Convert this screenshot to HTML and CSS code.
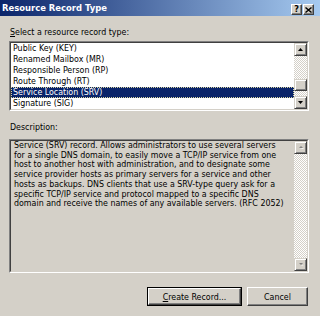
FILE: index.html
```html
<!DOCTYPE html>
<html>
<head>
<meta charset="utf-8">
<link rel="stylesheet" href="styles.css">
</head>
<body>
<div class="window">
  <div class="titlebar">
    <span class="title">Resource Record Type</span>
    <div class="caption-btns">
      <span class="cbtn help">?</span>
      <span class="cbtn close"><svg width="7" height="6" viewBox="0 0 7 6"><path d="M0.5 0.5 L6.5 5.5 M6.5 0.5 L0.5 5.5" stroke="#000" stroke-width="1.4" fill="none"/></svg></span>
    </div>
  </div>
  <div class="content">
    <div class="label"><u>S</u>elect a resource record type:</div>
    <div class="listbox sunken">
      <div class="sunken-inner">
        <ul class="items">
          <li>Public Key (KEY)</li>
          <li>Renamed Mailbox (MR)</li>
          <li>Responsible Person (RP)</li>
          <li>Route Through (RT)</li>
          <li class="selected">Service Location (SRV)</li>
          <li>Signature (SIG)</li>
        </ul>
        <div class="scrollbar">
          <div class="sbtn"><svg width="5" height="3" viewBox="0 0 5 3"><path d="M2.5 0 L5 3 L0 3 Z" fill="#000"/></svg></div>
          <div class="track"><div class="thumb"></div></div>
          <div class="sbtn"><svg width="5" height="3" viewBox="0 0 5 3"><path d="M0 0 L5 0 L2.5 3 Z" fill="#000"/></svg></div>
        </div>
      </div>
    </div>
    <div class="label desc-label">Description:</div>
    <div class="descbox sunken">
      <div class="sunken-inner">
        <div class="desc-text">Service (SRV) record. Allows administrators to use several servers<br>for a single DNS domain, to easily move a TCP/IP service from one<br>host to another host with administration, and to designate some<br>service provider hosts as primary servers for a service and other<br>hosts as backups. DNS clients that use a SRV-type query ask for a<br>specific TCP/IP service and protocol mapped to a specific DNS<br>domain and receive the names of any available servers. (RFC 2052)</div>
        <div class="scrollbar disabled">
          <div class="sbtn"><svg width="6" height="4" viewBox="0 0 6 4"><path d="M3 0 L5 2 L1 2 Z" fill="#808080"/><path d="M5 2 L6 3 L1 3 Z" fill="#fff" opacity="0.9"/></svg></div>
          <div class="track"></div>
          <div class="sbtn"><svg width="6" height="4" viewBox="0 0 6 4"><path d="M1 0 L5 0 L3 2 Z" fill="#808080"/><path d="M3 3 L4 2 L6 2 Z" fill="#fff" opacity="0.9"/></svg></div>
        </div>
      </div>
    </div>
    <div class="buttons">
      <button class="btn default"><span class="btn-face"><u>C</u>reate Record...</span></button>
      <button class="btn cancel"><span class="btn-face">Cancel</span></button>
    </div>
  </div>
</div>
</body>
</html>
```

FILE: styles.css
```css
* { box-sizing: border-box; }
html, body { margin: 0; padding: 0; }
body {
  width: 320px;
  height: 316px;
  overflow: hidden;
  background: #d4d0c8;
  font-family: "DejaVu Sans Condensed", "DejaVu Sans", sans-serif;
  font-stretch: condensed;
  font-size: 8.8px;
  color: #000;
}
.window { width: 320px; height: 316px; background: #d4d0c8; }
.titlebar {
  height: 16px;
  background: linear-gradient(to right, #0a246a, #a6caf0);
  display: flex;
  align-items: center;
  justify-content: space-between;
  padding: 0 6px 0 2px;
}
.title {
  color: #fff;
  font-weight: bold;
  font-size: 9.4px;
  line-height: 16px;
  white-space: nowrap;
}
.caption-btns { display: flex; gap: 1px; margin-top: 3px; }
.cbtn {
  width: 11px;
  height: 11px;
  background: #d4d0c8;
  border: 1px solid;
  border-color: #fff #404040 #404040 #fff;
  box-shadow: inset -1px -1px 0 #808080;
  display: flex;
  align-items: center;
  justify-content: center;
  font-weight: bold;
  font-size: 9px;
  line-height: 9px;
}
.content {
  padding: 11px 11px 0 9px;
  display: flex;
  flex-direction: column;
}
.label {
  line-height: 11px;
  height: 11px;
  padding-left: 1px;
  white-space: nowrap;
  margin-bottom: 3px;
}
.sunken {
  border: 1px solid;
  border-color: #808080 #fff #fff #808080;
}
.sunken-inner {
  border: 1px solid;
  border-color: #404040 #d4d0c8 #d4d0c8 #404040;
  display: flex;
  height: 100%;
}
.listbox { width: 300px; height: 70px; }
.listbox .sunken-inner { background: #fff; }
.items {
  list-style: none;
  margin: 0;
  padding: 0;
  flex: 1;
}
.items li {
  height: 11px;
  line-height: 11px;
  padding-left: 2px;
  white-space: nowrap;
}
.items li.selected {
  background: #0a246a;
  color: #fff;
  outline: 1px dotted #d8d4a0;
  outline-offset: -1px;
}
.scrollbar {
  width: 13px;
  display: flex;
  flex-direction: column;
}
.sbtn {
  width: 13px;
  height: 13px;
  flex: none;
  background: #d4d0c8;
  border: 1px solid;
  border-color: #d4d0c8 #404040 #404040 #d4d0c8;
  box-shadow: inset 1px 1px 0 #fff, inset -1px -1px 0 #808080;
  display: flex;
  align-items: center;
  justify-content: center;
}
.sbtn svg { display: block; }
.track {
  flex: 1;
  background: repeating-conic-gradient(#fff 0 25%, #d4d0c8 0 50%) 0 0 / 2px 2px;
}
.thumb {
  margin-top: 23px;
  height: 12px;
  background: #d4d0c8;
  border: 1px solid;
  border-color: #d4d0c8 #404040 #404040 #d4d0c8;
  box-shadow: inset 1px 1px 0 #fff, inset -1px -1px 0 #808080;
}
.desc-label { margin-top: 11px; margin-bottom: 6px; }
.descbox { width: 300px; height: 134px; }
.descbox .sunken-inner { background: #d4d0c8; }
.desc-text {
  flex: 1;
  padding: 0 0 0 3px;
  line-height: 9.7px;
  white-space: nowrap;
  overflow: hidden;
}
.buttons {
  display: flex;
  justify-content: flex-end;
  gap: 5px;
  margin-top: 14px;
  padding-right: 1px;
}
.btn {
  height: 19px;
  padding: 0;
  margin: 0;
  font: inherit;
  color: #000;
  background: #d4d0c8;
}
.btn.default { width: 95px; border: 1px solid #000; }
.btn.cancel {
  width: 61px;
  border: 1px solid;
  border-color: #fff #404040 #404040 #fff;
  box-shadow: inset -1px -1px 0 #808080;
}
.btn.default .btn-face {
  border: 1px solid;
  border-color: #fff #404040 #404040 #fff;
  box-shadow: inset -1px -1px 0 #808080;
}
.btn-face {
  display: flex;
  align-items: center;
  justify-content: center;
  height: 100%;
  white-space: nowrap;
}
```
